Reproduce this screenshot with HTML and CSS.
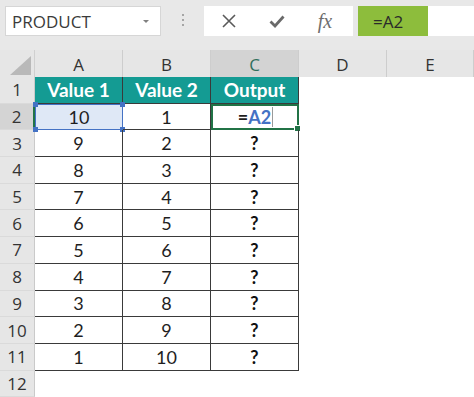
FILE: index.html
```html
<!DOCTYPE html>
<html lang="en">

<head>
    <meta charset="UTF-8">
    <title>PRODUCT formula</title>
    <link rel="stylesheet" href="styles.css">
</head>

<body>
    <!-- Barra de fórmulas -->
    <div class="toolbar">
        <div class="namebox"><span>PRODUCT</span><span class="caret"></span></div>
        <div class="dots"><i></i><i></i><i></i></div>
        <div class="fbuttons">
            <span class="fbtn">
                <svg width="14" height="14" viewBox="0 0 14 14"><path d="M1 1 L13 13 M13 1 L1 13" stroke="#5a5a5a" stroke-width="1.6" fill="none"/></svg>
            </span>
            <span class="fbtn">
                <svg width="16" height="13" viewBox="0 0 16 13"><path d="M1.5 6.5 L6 11 L14.5 1.5" stroke="#6a6a6a" stroke-width="2.8" fill="none"/></svg>
            </span>
            <span class="fbtn fx">fx</span>
        </div>
        <div class="formula"><span class="hl">=A2</span></div>
    </div>

    <!-- Planilha -->
    <div class="sheet">
        <div class="row colhead">
            <div class="corner"><svg width="21" height="19" viewBox="0 0 21 19"><polygon points="21,0 21,19 0,19" fill="#b9b9b9"/></svg></div>
            <div class="ch">A</div>
            <div class="ch">B</div>
            <div class="ch active">C</div>
            <div class="ch">D</div>
            <div class="ch">E</div>
        </div>

        <div class="row">
            <div class="rh">1</div>
            <div class="cell th">Value 1</div>
            <div class="cell th">Value 2</div>
            <div class="cell th">Output</div>
            <div class="blank"></div><div class="blank"></div>
        </div>
        <div class="row">
            <div class="rh active">2</div>
            <div class="cell ref">10
                <span class="knob tl"></span><span class="knob tr"></span><span class="knob bl"></span><span class="knob br"></span>
            </div>
            <div class="cell">1</div>
            <div class="cell editing"><b>=<span class="blue">A2</span></b><span class="cursor"></span><span class="fill"></span></div>
            <div class="blank"></div><div class="blank"></div>
        </div>
        <div class="row">
            <div class="rh">3</div>
            <div class="cell">9</div><div class="cell">2</div><div class="cell q">?</div>
            <div class="blank"></div><div class="blank"></div>
        </div>
        <div class="row">
            <div class="rh">4</div>
            <div class="cell">8</div><div class="cell">3</div><div class="cell q">?</div>
            <div class="blank"></div><div class="blank"></div>
        </div>
        <div class="row">
            <div class="rh">5</div>
            <div class="cell">7</div><div class="cell">4</div><div class="cell q">?</div>
            <div class="blank"></div><div class="blank"></div>
        </div>
        <div class="row">
            <div class="rh">6</div>
            <div class="cell">6</div><div class="cell">5</div><div class="cell q">?</div>
            <div class="blank"></div><div class="blank"></div>
        </div>
        <div class="row">
            <div class="rh">7</div>
            <div class="cell">5</div><div class="cell">6</div><div class="cell q">?</div>
            <div class="blank"></div><div class="blank"></div>
        </div>
        <div class="row">
            <div class="rh">8</div>
            <div class="cell">4</div><div class="cell">7</div><div class="cell q">?</div>
            <div class="blank"></div><div class="blank"></div>
        </div>
        <div class="row">
            <div class="rh">9</div>
            <div class="cell">3</div><div class="cell">8</div><div class="cell q">?</div>
            <div class="blank"></div><div class="blank"></div>
        </div>
        <div class="row">
            <div class="rh">10</div>
            <div class="cell">2</div><div class="cell">9</div><div class="cell q">?</div>
            <div class="blank"></div><div class="blank"></div>
        </div>
        <div class="row">
            <div class="rh">11</div>
            <div class="cell">1</div><div class="cell">10</div><div class="cell q">?</div>
            <div class="blank"></div><div class="blank"></div>
        </div>
        <div class="row last">
            <div class="rh">12</div>
            <div class="blank"></div><div class="blank"></div><div class="blank"></div>
            <div class="blank"></div><div class="blank"></div>
        </div>
    </div>
</body>

</html>
```

FILE: styles.css
```css
body {
    margin: 0;
    width: 474px;
    height: 397px;
    overflow: hidden;
    background: #fff;
    font-family: "Open Sans", sans-serif;
    color: #333;
}

/* BARRA DE FÓRMULAS */
.toolbar {
    display: flex;
    align-items: flex-start;
    height: 50px;
    box-sizing: border-box;
    padding: 6px 0 0 5px;
    background: #e8e8e8;
}

.namebox {
    width: 156px;
    height: 30px;
    box-sizing: border-box;
    display: flex;
    align-items: center;
    justify-content: space-between;
    padding: 0 11px 0 6px;
    background: #fff;
    border: 1px solid #d6d6d6;
    font-size: 17px;
    color: #3a3a3a;
}

.caret {
    border-left: 3px solid transparent;
    border-right: 3px solid transparent;
    border-top: 3px solid #808080;
}

.dots {
    width: 43px;
    display: flex;
    flex-direction: column;
    align-items: center;
    gap: 3px;
    padding-top: 8px;
}

.dots i {
    width: 2px;
    height: 2px;
    background: #a5a5a5;
}

.fbuttons {
    width: 149px;
    height: 30px;
    display: flex;
    align-items: center;
    padding-left: 1px;
    box-sizing: border-box;
    background: #fff;
}

.fbtn {
    width: 48px;
    display: flex;
    justify-content: center;
    align-items: center;
}

.fx {
    font-family: "Liberation Serif", serif;
    font-style: italic;
    font-size: 20px;
    color: #6e6e6e;
    padding-right: 4px;
}

.formula {
    flex: 1;
    height: 30px;
    margin-left: 5px;
    background: #fff;
}

.hl {
    width: 70px;
    height: 30px;
    box-sizing: border-box;
    display: flex;
    align-items: center;
    padding-left: 15px;
    background: #8dbd3c;
    font-size: 17px;
    color: #2a2a2a;
}

/* PLANILHA */
.row {
    display: grid;
    grid-template-columns: 35px 88px 88px 88px 88px 1fr;
    height: 26.7px;
}

.row.colhead {
    height: 27px;
    background: #e6e6e6;
}

.row.last {
    height: 26px;
}

.corner {
    display: flex;
    align-items: flex-end;
    justify-content: flex-end;
    padding: 0 3px 2px 0;
    border-right: 1px solid #d0d0d0;
}

.ch {
    display: flex;
    align-items: center;
    justify-content: center;
    border-right: 1px solid #cdcdcd;
    font-size: 17px;
    color: #333;
    padding-top: 2px;
}

.ch.active {
    background: #d3d3d3;
    color: #2f6f5c;
}

.rh {
    display: flex;
    align-items: center;
    justify-content: center;
    background: #e6e6e6;
    border-right: 1px solid #cacaca;
    border-bottom: 1px solid #dadada;
    box-sizing: border-box;
    font-size: 17px;
    color: #333;
}

.rh.active {
    background: #d4d4d4;
    border-right: 2px solid #217346;
}

.cell {
    position: relative;
    display: flex;
    align-items: center;
    justify-content: center;
    box-sizing: border-box;
    border-right: 1px solid #3a3a3a;
    border-bottom: 1px solid #3a3a3a;
    font-family: Lato, sans-serif;
    font-size: 18px;
    color: #1e1e1e;
}

.cell.th {
    background: #149b93;
    color: #fff;
    font-weight: bold;
    font-size: 19px;
}

.cell.q {
    font-weight: bold;
    color: #111;
}

/* referência destacada em A2 */
.cell.ref {
    background: #dfe8f6;
    border: 1px solid #4472c4;
}

.knob {
    position: absolute;
    width: 5px;
    height: 5px;
    background: #4472c4;
}

.knob.tl { left: -3px; top: -3px; }
.knob.tr { right: -3px; top: -3px; }
.knob.bl { left: -3px; bottom: -3px; }
.knob.br { right: -3px; bottom: -3px; }

/* célula em edição C2 */
.cell.editing {
    border: 2px solid #217346;
    padding-left: 1px;
}

.blue {
    color: #4472c4;
}

.cursor {
    align-self: stretch;
    width: 1px;
    margin: 1px 0 1px 1px;
    background: #9a9a9a;
}

.fill {
    position: absolute;
    right: -4px;
    bottom: -4px;
    width: 5px;
    height: 5px;
    background: #217346;
    border: 1px solid #fff;
}

.blank {
    background: #fff;
}
```
